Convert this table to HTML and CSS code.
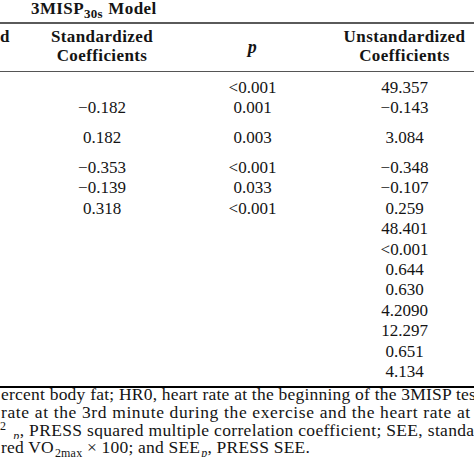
FILE: index.html
```html
<!DOCTYPE html>
<html>
<head>
<meta charset="utf-8">
<link rel="stylesheet" href="styles.css">
</head>
<body>
<div class="page">
  <div class="title">3MISP<sub>30s</sub> Model</div>
  <div class="head">
    <div class="cell lead">d</div>
    <div class="cell">Standardized<br>Coefficients</div>
    <div class="cell pcol"><i>p</i></div>
    <div class="cell">Unstandardized<br>Coefficients</div>
  </div>
  <div class="rows">
    <div class="row"><div></div><div class="cell"></div><div class="cell">&lt;0.001</div><div class="cell">49.357</div></div>
    <div class="row gap"><div></div><div class="cell">−0.182</div><div class="cell">0.001</div><div class="cell">−0.143</div></div>
    <div class="row gap"><div></div><div class="cell">0.182</div><div class="cell">0.003</div><div class="cell">3.084</div></div>
    <div class="row"><div></div><div class="cell">−0.353</div><div class="cell">&lt;0.001</div><div class="cell">−0.348</div></div>
    <div class="row"><div></div><div class="cell">−0.139</div><div class="cell">0.033</div><div class="cell">−0.107</div></div>
    <div class="row"><div></div><div class="cell">0.318</div><div class="cell">&lt;0.001</div><div class="cell">0.259</div></div>
    <div class="row"><div></div><div class="cell"></div><div class="cell"></div><div class="cell">48.401</div></div>
    <div class="row"><div></div><div class="cell"></div><div class="cell"></div><div class="cell">&lt;0.001</div></div>
    <div class="row"><div></div><div class="cell"></div><div class="cell"></div><div class="cell">0.644</div></div>
    <div class="row"><div></div><div class="cell"></div><div class="cell"></div><div class="cell">0.630</div></div>
    <div class="row"><div></div><div class="cell"></div><div class="cell"></div><div class="cell">4.2090</div></div>
    <div class="row"><div></div><div class="cell"></div><div class="cell"></div><div class="cell">12.297</div></div>
    <div class="row"><div></div><div class="cell"></div><div class="cell"></div><div class="cell">0.651</div></div>
    <div class="row"><div></div><div class="cell"></div><div class="cell"></div><div class="cell">4.134</div></div>
  </div>
  <div class="notes">
    <div class="line l1">ercent body fat; HR0, heart rate at the beginning of the 3MISP test;</div>
    <div class="line l2">rate at the 3rd minute during the exercise and the heart rate at the</div>
    <div class="line l3"><span class="sup">2</span><span class="sub"><i>p</i></span>, PRESS squared multiple correlation coefficient; SEE, standard</div>
    <div class="line l4">red VO<span class="sub">2max</span> × 100; and SEE<span class="sub"><i>p</i></span>, PRESS SEE.</div>
  </div>
</div>
</body>
</html>
```
FILE: styles.css
```css
html, body {
  margin: 0;
  padding: 0;
  background: #fff;
  overflow: hidden;
}
body {
  width: 474px;
  height: 474px;
  font-family: "Liberation Serif", "Times New Roman", serif;
  color: #141414;
}
.page {
  width: 474px;
  overflow: hidden;
}
.title {
  font-weight: bold;
  font-size: 17px;
  line-height: 17px;
  height: 17px;
  padding-left: 31px;
  letter-spacing: 0.4px;
  margin-bottom: 5px;
}
.title sub {
  font-size: 13px;
  vertical-align: -3.5px;
  line-height: 0;
  letter-spacing: 0.2px;
  margin-right: 1px;
}
.head {
  display: grid;
  grid-template-columns: 30px 144px 157px 147px;
  border-top: 2px solid #5a5a5a;
  border-bottom: 1px solid #555;
  padding: 4.3px 0 5.7px;
  font-weight: bold;
  font-size: 17px;
  line-height: 18.5px;
  letter-spacing: 0.4px;
}
.cell {
  text-align: center;
  white-space: nowrap;
}
.lead {
  text-align: left;
}
.pcol {
  align-self: center;
  font-size: 18px;
}
.rows {
  padding: 5.65px 0 3.55px;
  border-bottom: 2px solid #000;
  font-size: 17px;
  line-height: 20.4px;
}
.row {
  display: grid;
  grid-template-columns: 30px 144px 157px 147px;
  height: 20.4px;
}
.row.gap {
  margin-bottom: 9.6px;
}
.notes {
  margin-top: -1.5px;
  font-size: 17.5px;
  line-height: 17.7px;
}
.line {
  white-space: nowrap;
  overflow: hidden;
}
.l1 {
  padding-left: 1px;
  letter-spacing: 0.22px;
}
.l2 {
  padding-left: 1px;
  letter-spacing: 0.63px;
}
.l3 {
  letter-spacing: 0.33px;
}
.l4 {
  padding-left: 1px;
  letter-spacing: 0.2px;
}
.sup {
  font-size: 12px;
  vertical-align: 6px;
  line-height: 0;
}
.sub {
  font-size: 12px;
  vertical-align: -4px;
  line-height: 0;
  margin-left: 1px;
}
.l3 .sub {
  margin-left: 7px;
}
```
